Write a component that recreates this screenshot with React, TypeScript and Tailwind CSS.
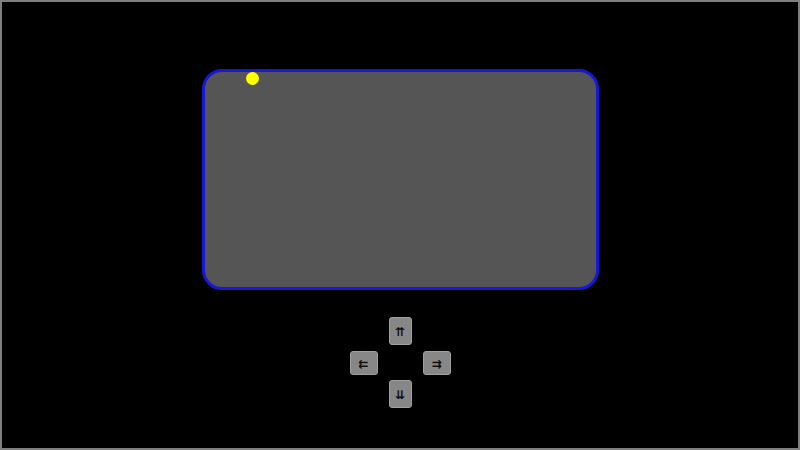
import type { ReactNode } from "react";

function PadButton({ children, wide }: { children: ReactNode; wide?: boolean }) {
  return (
    <button
      className={
        (wide ? "w-[28px] h-[24px]" : "w-[23px] h-[28px]") +
        " flex items-center justify-center pt-[2px] rounded-[3px] border border-[#a0a0a0] bg-[#878787] text-[12px] font-bold leading-none text-[#111] font-['DejaVu_Sans',sans-serif]"
      }
    >
      {children}
    </button>
  );
}

export default function App() {
  return (
    <div className="w-[800px] h-[450px] bg-black border-2 border-[#7f7f7f] flex flex-col items-center pt-[67px]">
      {/* play field */}
      <div className="relative w-[397px] h-[221px] rounded-[20px] border-[3px] border-[#1717d6] bg-[#555555]">
        <div className="absolute left-[41px] top-[0px] w-[13px] h-[13px] rounded-full bg-[#ffff00]" />
      </div>

      {/* direction pad */}
      <div className="mt-[27px] flex flex-col items-center">
        <PadButton>⇈</PadButton>
        <div className="mt-[6px] flex gap-[45px]">
          <PadButton wide>⇇</PadButton>
          <PadButton wide>⇉</PadButton>
        </div>
        <div className="mt-[5px]">
          <PadButton>⇊</PadButton>
        </div>
      </div>
    </div>
  );
}
